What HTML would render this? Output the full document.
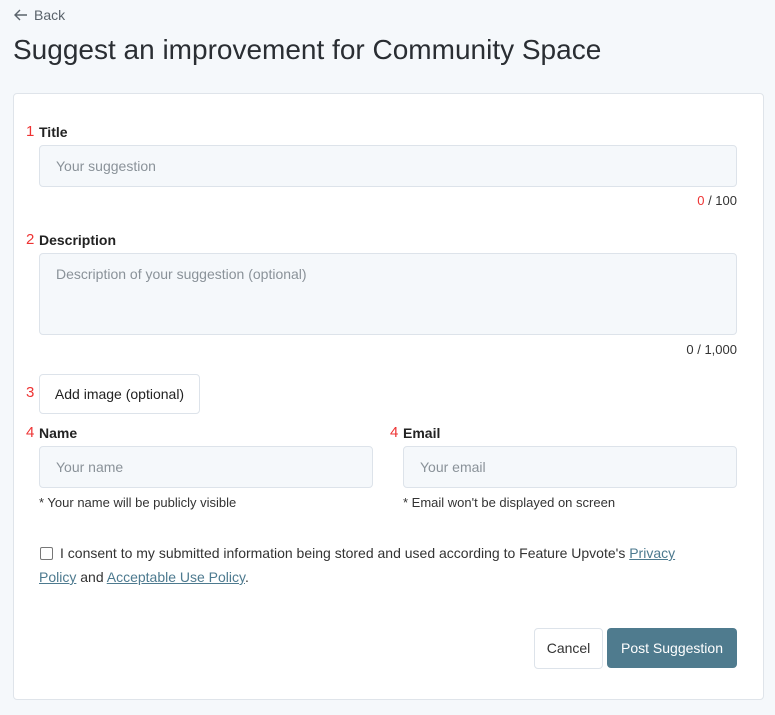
<!DOCTYPE html><html><head><style>
body{margin:0;width:775px;height:715px;background:#f5f8fb;font-family:"Liberation Sans",sans-serif;color:#222;position:relative;overflow:hidden}
.a{position:absolute;white-space:nowrap}
.card{position:absolute;left:13px;top:93px;width:749px;height:605px;background:#fff;border:1px solid #dfe4ea;border-radius:4px}
.inp{position:absolute;background:#f5f8fb;border:1px solid #dde3ea;border-radius:4px;box-sizing:border-box;color:#8a9299;font-size:14px;padding-left:16px}
.lab{font-size:14px;font-weight:bold;color:#222}
.num{color:#e33;font-size:15px}
.sm{font-size:13px;color:#333}
a{color:#4d7a8f}
</style></head><body>
<div class="a" style="left:14px;top:7px;font-size:14px;color:#5a636b"><svg width="14" height="12" viewBox="0 0 14 12" style="vertical-align:-1px;margin-right:6px"><path d="M13 6H2M6 1L1 6l5 5" fill="none" stroke="#5a636b" stroke-width="1.4"/></svg>Back</div>
<div class="a" style="left:13px;top:34px;font-size:28px;color:#2a2e33">Suggest an improvement for Community Space</div>
<div class="card"></div>
<div class="a num" style="left:26px;top:123px">1</div><div class="a lab" style="left:39px;top:124px">Title</div>
<div class="inp" style="left:39px;top:145px;width:698px;height:42px;line-height:40px">Your suggestion</div>
<div class="a sm" style="right:38px;top:193px"><span style="color:#e33">0</span> / 100</div>
<div class="a num" style="left:26px;top:231px">2</div><div class="a lab" style="left:39px;top:232px">Description</div>
<div class="inp" style="left:39px;top:253px;width:698px;height:82px;padding-top:12px">Description of your suggestion (optional)</div>
<div class="a sm" style="right:38px;top:342px">0 / 1,000</div>
<div class="a num" style="left:26px;top:384px">3</div>
<div class="a" style="left:39px;top:374px;width:159px;height:38px;border:1px solid #dde3ea;border-radius:4px;background:#fff;font-size:14px;line-height:38px;text-align:center">Add image (optional)</div>
<div class="a num" style="left:26px;top:424px">4</div><div class="a lab" style="left:39px;top:425px">Name</div>
<div class="a num" style="left:390px;top:424px">4</div><div class="a lab" style="left:403px;top:425px">Email</div>
<div class="inp" style="left:39px;top:446px;width:334px;height:42px;line-height:40px">Your name</div>
<div class="inp" style="left:403px;top:446px;width:334px;height:42px;line-height:40px">Your email</div>
<div class="a sm" style="left:39px;top:495px">* Your name will be publicly visible</div>
<div class="a sm" style="left:403px;top:495px">* Email won't be displayed on screen</div>
<div class="a" style="left:40px;top:547px;width:11px;height:11px;border:1px solid #777;border-radius:2px;background:#fff"></div>
<div class="a" style="left:39px;top:541px;font-size:14px;line-height:24px;color:#333;white-space:normal;width:675px;text-indent:21px">I consent to my submitted information being stored and used according to Feature Upvote's <a href="#">Privacy Policy</a> and <a href="#">Acceptable Use Policy</a>.</div>
<div class="a" style="left:534px;top:628px;width:67px;height:39px;border:1px solid #dde3ea;border-radius:4px;background:#fff;font-size:14px;line-height:39px;text-align:center;color:#333">Cancel</div>
<div class="a" style="left:607px;top:628px;width:130px;height:40px;border-radius:4px;background:#4f7b8e;font-size:14px;line-height:40px;text-align:center;color:#fff">Post Suggestion</div>
</body></html>
